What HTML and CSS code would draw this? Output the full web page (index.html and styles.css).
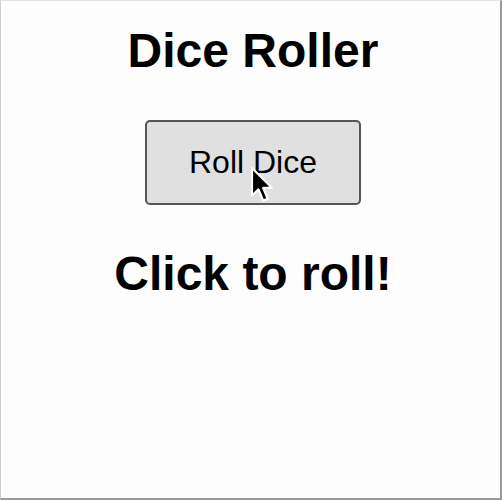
FILE: index.html
```html
<!DOCTYPE html>
<html lang="en">
<head>
    <meta charset="UTF-8">
    <meta name="viewport" content="width=device-width, initial-scale=1.0">
    <title>Dice Roller</title>
    <link rel="stylesheet" href="styles.css">
</head>
<body>
    <div class="window">
        <h1>Dice Roller</h1>
        <button id="rollBtn" class="roll-btn">Roll Dice</button>
        <div id="result" class="result">Click to roll!</div>

        <!-- mouse pointer resting on the button -->
        <svg class="pointer" width="25" height="38" viewBox="0 0 13 20">
            <path d="M1 1 L1 15.5 L4.4 12.3 L6.9 18.2 L9.2 17.2 L6.8 11.5 L11.4 11.5 Z"
                  fill="#000" stroke="#fff" stroke-width="1.1" stroke-linejoin="round"/>
        </svg>
    </div>
</body>
</html>
```

FILE: styles.css
```css
* {
    box-sizing: border-box;
    margin: 0;
    padding: 0;
}

body {
    background-color: #fdfdfd;
    font-family: "Liberation Sans", Arial, Helvetica, sans-serif;
    color: #000;
}

.window {
    position: relative;
    width: 502px;
    height: 500px;
    padding-left: 5px;
    border-left: 1px solid #cfcfcf;
    border-top: 1px solid #e2e2e2;
    border-right: 2px solid #9a9a9a;
    border-bottom: 2px solid #9a9a9a;
    display: flex;
    flex-direction: column;
    align-items: center;
}

h1 {
    margin-top: 27px;
    font-size: 48px;
    line-height: 46px;
    font-weight: bold;
}

.roll-btn {
    margin-top: 46px;
    width: 216px;
    height: 85px;
    font-family: inherit;
    font-size: 32px;
    color: #000;
    background-color: #e0e0e0;
    border: 2px solid #555;
    border-radius: 5px;
    cursor: pointer;
}

.result {
    margin-top: 46px;
    font-size: 48px;
    line-height: 46px;
    font-weight: bold;
}

.pointer {
    position: absolute;
    left: 249px;
    top: 165px;
}
```
